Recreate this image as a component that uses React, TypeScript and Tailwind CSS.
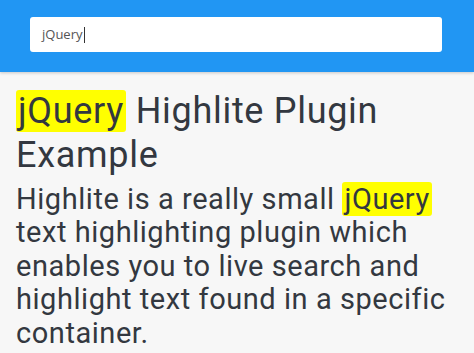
export default function App() {
  return (
    <div className="min-h-[353px] bg-[#f7f7f7] font-['Roboto',sans-serif] text-[#333840]">
      <header className="h-[72px] bg-[#2196f3] pt-[17px] pl-[30px] pr-[32px] shadow-[0_1px_3px_rgba(0,0,0,0.2)]">
        <div className="flex h-[35px] items-center rounded-[3px] bg-white px-3">
          <span className="font-['Open_Sans',sans-serif] text-[13px] text-[#555]">jQuery</span>
          <span className="ml-px h-[16px] w-px bg-[#333]" />
        </div>
      </header>
      <main className="px-4 pt-[17px]">
        <h1 className="text-[36px] leading-[44px] tracking-[0.7px]">
          <mark className="rounded-[3px] bg-[#ffff00] px-0.5 text-[#333840]">jQuery</mark> Highlite Plugin Example
        </h1>
        <p className="mt-[6px] text-[29px] leading-[33.4px] tracking-[0.55px]">
          Highlite is a really small{' '}
          <mark className="rounded-[3px] bg-[#ffff00] px-0.5 text-[#333840]">jQuery</mark> text highlighting plugin which enables
          you to live search and highlight text found in a specific container.
        </p>
      </main>
    </div>
  )
}
